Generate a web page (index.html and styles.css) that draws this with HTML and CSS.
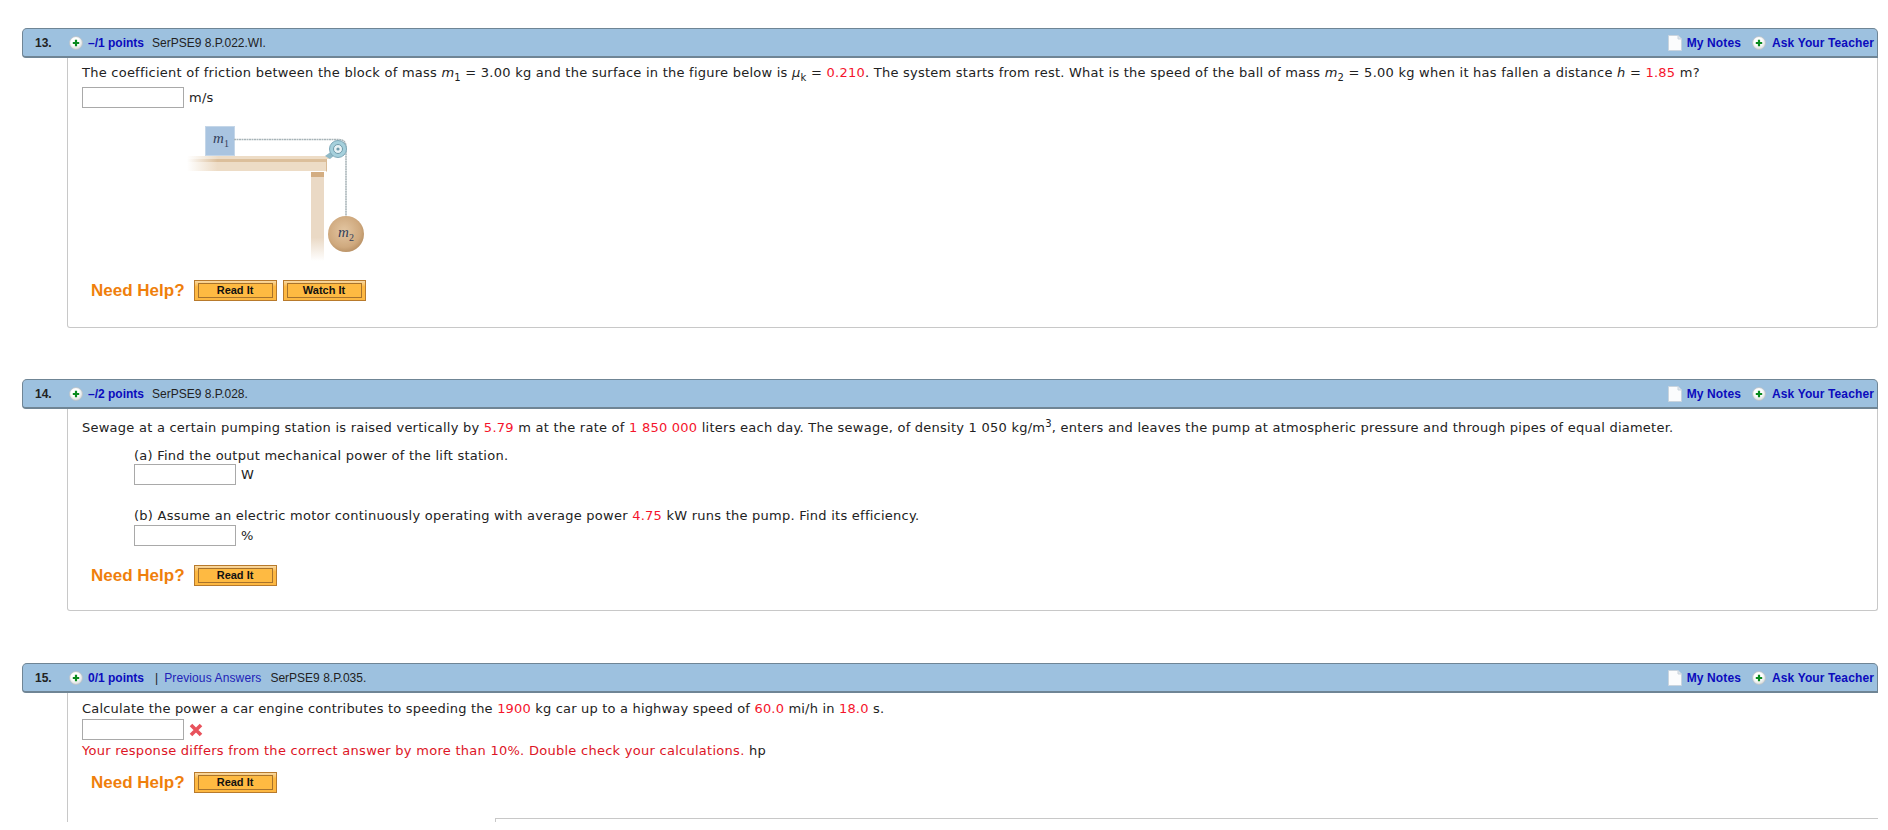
FILE: index.html
```html
<!DOCTYPE html>
<html lang="en">
<head>
<meta charset="utf-8">
<title>Questions</title>
<link rel="stylesheet" href="styles.css">
</head>
<body>
<svg class="defs" width="0" height="0" aria-hidden="true"><defs>
<radialGradient id="plusbg" cx=".45" cy=".4" r=".6"><stop offset=".5" stop-color="#fff"/><stop offset="1" stop-color="#d5d8d8"/></radialGradient>
<symbol id="plus" viewBox="0 0 14 14"><circle cx="7" cy="7" r="6.5" fill="url(#plusbg)" stroke="#b9c2c8" stroke-width=".8"/><path d="M7 3.8v6.4M3.8 7h6.4" stroke="#0a8a1e" stroke-width="2.2"/></symbol>
<symbol id="note" viewBox="0 0 14 16"><path d="M0.5 0.5H10L13.5 4V15.5H0.5Z" fill="#fbfcfd" stroke="#c9d4de"/><path d="M10 0.5V4H13.5" fill="#dfe5ea" stroke="#c9d4de"/></symbol>
</defs></svg>

<section class="question q13">
  <header class="bar">
    <div class="bar-left"><b class="num">13.</b><svg class="plus"><use href="#plus"/></svg><b class="points">–/1 points</b><span class="code">SerPSE9 8.P.022.WI.</span></div>
    <div class="bar-right"><svg class="note"><use href="#note"/></svg><b class="link">My Notes</b><svg class="plus plus-r"><use href="#plus"/></svg><b class="link link-ask">Ask Your Teacher</b></div>
  </header>
  <div class="body">
    <p class="text">The coefficient of friction between the block of mass <i>m</i><sub>1</sub> = 3.00 kg and the surface in the figure below is <i>μ</i><sub>k</sub> = <span class="red">0.210</span>. The system starts from rest. What is the speed of the ball of mass <i>m</i><sub>2</sub> = 5.00 kg when it has fallen a distance <i>h</i> = <span class="red">1.85</span> m?</p>
    <div class="answer"><span class="field"></span><span class="unit">m/s</span></div>
    <svg class="figure" width="210" height="150" viewBox="0 0 210 150" role="img" aria-label="Block on table connected over a pulley to a hanging ball">
      <defs>
        <linearGradient id="fadeA" x1="0" x2="1" y1="0" y2="0"><stop offset="0" stop-color="#fff"/><stop offset=".22" stop-color="#eddcc6"/></linearGradient>
        <linearGradient id="fadeB" x1="0" x2="1" y1="0" y2="0"><stop offset="0" stop-color="#fff"/><stop offset=".22" stop-color="#dcbf9b"/></linearGradient>
        <linearGradient id="leg" x1="0" x2="0" y1="0" y2="1"><stop offset=".72" stop-color="#ead9c5"/><stop offset="1" stop-color="#fff"/></linearGradient>
        <radialGradient id="ball" cx=".45" cy=".42" r=".62"><stop offset="0" stop-color="#e3c6a2"/><stop offset=".72" stop-color="#cfa97e"/><stop offset="1" stop-color="#b68e62"/></radialGradient>
      </defs>
      <rect x="35.5" y="11.5" width="29" height="29" fill="#a9c4e0" stroke="#c4d6e8"/>
      <text x="43" y="28" class="fig-label">m</text><text x="54" y="32" class="fig-sub">1</text>
      <path d="M64 24.5H168Q176 24.5 176 32V103" fill="none" stroke="#a8b4b8" stroke-width="1.6" stroke-dasharray="2 .5"/>
      <rect x="17" y="41" width="143" height="3" fill="url(#fadeA)"/>
      <rect x="17" y="44" width="139" height="3" fill="url(#fadeB)"/>
      <rect x="17" y="47" width="139" height="9" fill="url(#fadeA)"/>
      <path d="M156.5 44V56.5" fill="none" stroke="#d9bb96"/>
      <rect x="141" y="57" width="13" height="5" fill="#d3ad82"/>
      <rect x="141" y="62" width="13" height="84" fill="url(#leg)"/>
      <path d="M155 41L162 36L165 40L160 44Z" fill="#8fb9c6"/>
      <circle cx="168" cy="34" r="8.5" fill="#a5d0dc" stroke="#7ea8b8"/>
      <circle cx="168" cy="34" r="4.5" fill="#e8f3f6" stroke="#6f9aaa"/>
      <circle cx="168" cy="34" r="1.6" fill="#6f9aaa"/>
      <circle cx="176" cy="119" r="18" fill="url(#ball)"/>
      <text x="168" y="122" class="fig-label">m</text><text x="179" y="126" class="fig-sub">2</text>
    </svg>
    <div class="help help-13"><b class="help-label">Need Help?</b><span class="btn"><b>Read It</b></span><span class="btn"><b>Watch It</b></span></div>
  </div>
</section>

<section class="question q14">
  <header class="bar">
    <div class="bar-left"><b class="num">14.</b><svg class="plus"><use href="#plus"/></svg><b class="points">–/2 points</b><span class="code">SerPSE9 8.P.028.</span></div>
    <div class="bar-right"><svg class="note"><use href="#note"/></svg><b class="link">My Notes</b><svg class="plus plus-r"><use href="#plus"/></svg><b class="link link-ask">Ask Your Teacher</b></div>
  </header>
  <div class="body">
    <p class="text">Sewage at a certain pumping station is raised vertically by <span class="red">5.79</span> m at the rate of <span class="red">1 850 000</span> liters each day. The sewage, of density 1 050 kg/m<sup>3</sup>, enters and leaves the pump at atmospheric pressure and through pipes of equal diameter.</p>
    <div class="part">
      <p class="text">(a) Find the output mechanical power of the lift station.</p>
      <div class="answer answer-a"><span class="field"></span><span class="unit">W</span></div>
    </div>
    <div class="part part-b">
      <p class="text">(b) Assume an electric motor continuously operating with average power <span class="red">4.75</span> kW runs the pump. Find its efficiency.</p>
      <div class="answer answer-tight"><span class="field"></span><span class="unit">%</span></div>
    </div>
    <div class="help help-14"><b class="help-label">Need Help?</b><span class="btn"><b>Read It</b></span></div>
  </div>
</section>

<section class="question q15">
  <header class="bar">
    <div class="bar-left"><b class="num">15.</b><svg class="plus"><use href="#plus"/></svg><b class="points">0/1 points</b><span class="sep">|</span><span class="prev">Previous Answers</span><span class="code">SerPSE9 8.P.035.</span></div>
    <div class="bar-right"><svg class="note"><use href="#note"/></svg><b class="link">My Notes</b><svg class="plus plus-r"><use href="#plus"/></svg><b class="link link-ask">Ask Your Teacher</b></div>
  </header>
  <div class="body">
    <p class="text text-calc">Calculate the power a car engine contributes to speeding the <span class="red">1900</span> kg car up to a highway speed of <span class="red">60.0</span> mi/h in <span class="red">18.0</span> s.</p>
    <div class="answer answer-15"><span class="field"></span><svg class="cross" viewBox="0 0 14 14" width="14" height="14" aria-hidden="true"><path d="M2 2L12 12M12 2L2 12" stroke="#e8525c" stroke-width="3.6"/></svg></div>
    <p class="text response"><span class="red-dark">Your response differs from the correct answer by more than 10%. Double check your calculations.</span> hp</p>
    <div class="help help-15"><b class="help-label">Need Help?</b><span class="btn"><b>Read It</b></span></div>
    <div class="next-box"></div>
  </div>
</section>
</body>
</html>
```
FILE: styles.css
```css
html, body { margin: 0; padding: 0; background: #fff; }
body { box-sizing: border-box; width: 1888px; height: 830px; padding-top: 28px; overflow: hidden; position: relative; font-family: "Liberation Sans", Arial, sans-serif; }
.defs { position: absolute; }
.question { margin: 0 10px 0 22px; }
.q14 { margin-top: 51px; }
.q15 { margin-top: 52px; }
.bar { box-sizing: border-box; height: 30px; border: 1px solid #6f8595; border-bottom-width: 2px; border-radius: 5px 5px 0 4px; background: #9dc1df; display: flex; justify-content: space-between; align-items: center; font-size: 12px; }
.bar-left, .bar-right { display: flex; align-items: center; }
.num { width: 34px; margin-left: 12px; color: #222; font-size: 12px; }
.plus { width: 14px; height: 14px; margin-right: 5px; }
.plus-r { margin-right: 6px; }
.points { color: #0b0bbd; margin-right: 8px; }
.code { color: #222; }
.sep { color: #222; margin: 0 6px 0 3px; }
.prev { color: #2121b8; margin-right: 9px; letter-spacing: .12px; }
.note { width: 14px; height: 16px; margin-right: 5px; }
.link { color: #0b0bbd; margin-right: 11px; letter-spacing: .12px; }
.link-ask { margin-right: 3px; }
.body { box-sizing: border-box; margin-left: 45px; border-left: 1px solid #c8c8c8; border-right: 1px solid #c8c8c8; border-bottom: 1px solid #c8c8c8; border-radius: 0 0 3px 3px; padding: 6px 0 0 14px; font-family: "DejaVu Sans", Verdana, sans-serif; font-size: 13px; color: #222; }
.q13 .body { height: 270px; }
.q14 .body { height: 202px; padding-top: 10px; }
.q15 .body { height: 129px; border-right: 0; border-bottom: 0; border-radius: 0; position: relative; padding-top: 7px; }
.text { margin: 0; line-height: 18px; white-space: nowrap; letter-spacing: .245px; }
.text-calc { letter-spacing: .185px; }
.text sub, .text sup { font-size: 10px; line-height: 0; }
.red { color: #f5142c; }
.red-dark { color: #dd1526; }
.answer { display: flex; align-items: center; margin-top: 5px; height: 21px; letter-spacing: .245px; }
.answer-a { margin-top: -1px; }
.answer-tight { margin-top: 0; }
.answer-15 { margin-top: 1px; }
.field { display: block; width: 100px; height: 19px; border: 1px solid #a9a9a9; background: #fff; }
.unit { margin-left: 5px; }
.cross { margin-left: 5px; }
.figure { display: block; margin: 7px 0 0 88px; }
.fig-label { font: italic 15px "Liberation Serif", serif; fill: #33405a; }
.fig-sub { font: 10px "Liberation Serif", serif; fill: #33405a; }
.help { display: flex; align-items: center; height: 21px; margin: 12px 0 0 9px; }
.help-13 { margin-top: 15px; }
.help-14 { margin-top: 19px; }
.help-15 { margin-top: 12px; }
.help-label { font-family: "Liberation Sans", Arial, sans-serif; font-size: 17px; color: #ef7f0c; margin-right: 9px; }
.btn { box-sizing: border-box; width: 83px; height: 21px; margin-right: 6px; border: 1px solid #b87a2c; background: linear-gradient(#f7d9a6, #fdb842 30%); padding: 2px 3px 2px; display: flex; }
.btn b { flex: 1; display: block; border: 1px solid #a8732c; background: #feba42; font: bold 11px/13px "Liberation Sans", Arial, sans-serif; color: #111; text-align: center; }
.part { margin: 10px 0 0 52px; }
.part-b { margin-top: 22px; }
.response { margin-top: 2px; letter-spacing: .27px; }
.next-box { position: absolute; left: 427px; top: 125px; right: 0; height: 4px; box-sizing: border-box; border-top: 1px solid #c8c8c8; border-left: 1px solid #c8c8c8; }
```
